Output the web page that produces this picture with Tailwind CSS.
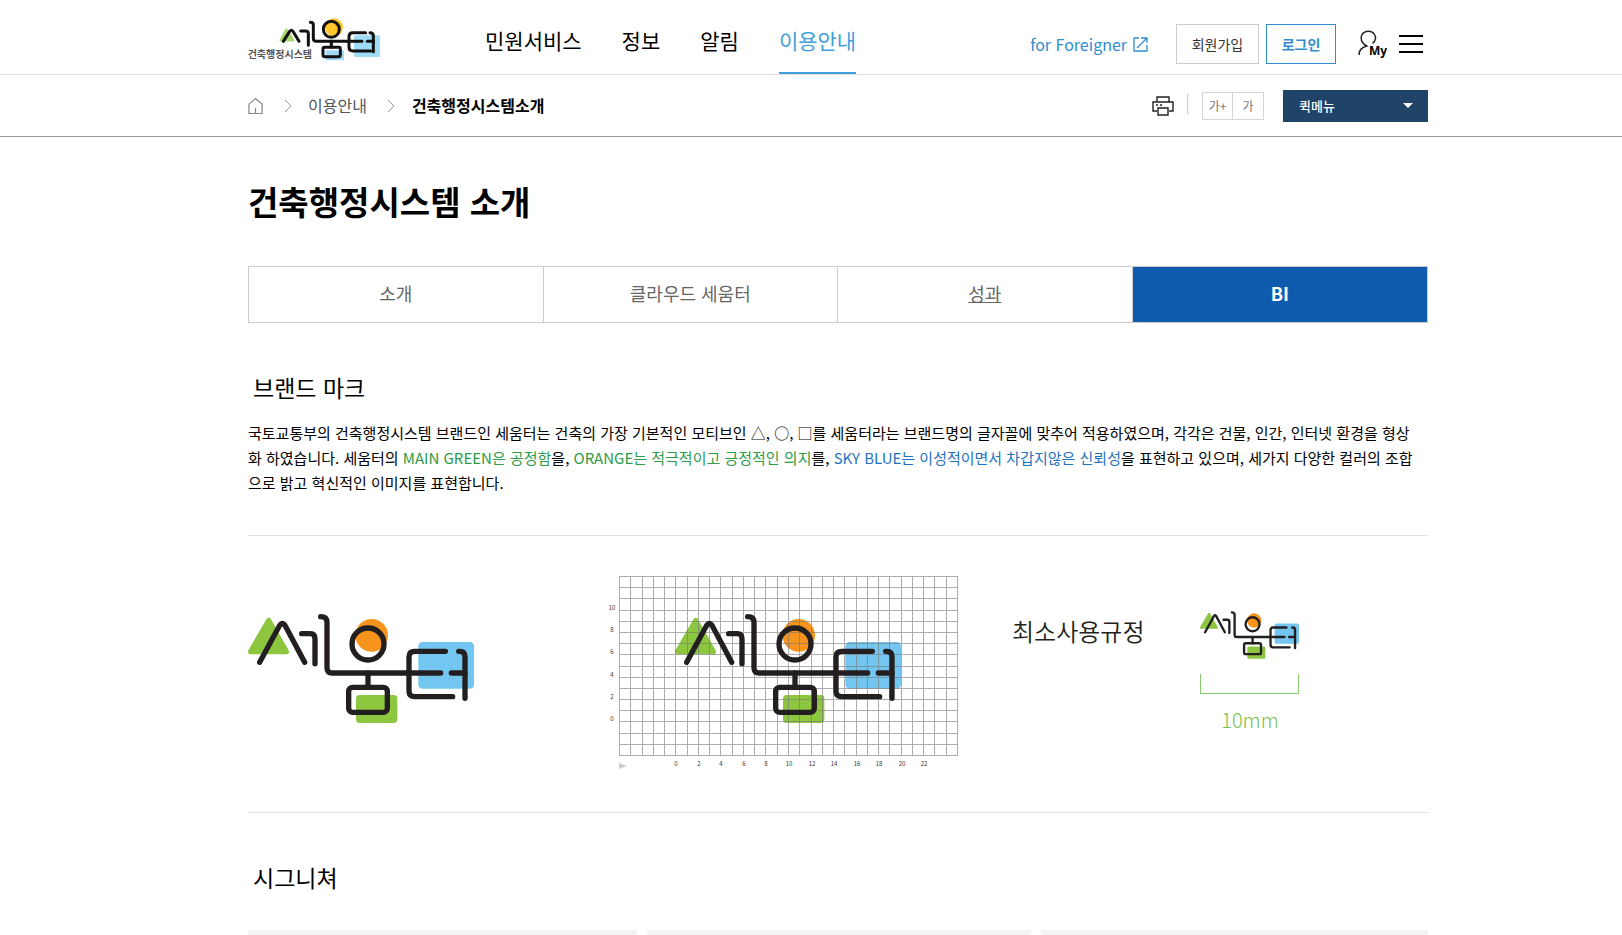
<!DOCTYPE html>
<html lang="ko">
<head>
    <meta charset="UTF-8">
    <meta name="viewport" content="width=device-width, initial-scale=1.0">
    <title>건축행정시스템 소개 - 세움터</title>
    <script src="https://cdn.jsdelivr.net/npm/@tailwindcss/browser@4"></script>
</head>
<body class="bg-white text-black font-['Noto_Sans_CJK_KR',sans-serif]">
    <!-- Shared brand mark -->
    <svg class="hidden" aria-hidden="true">
        <symbol id="mark" viewBox="54 72 678 327">
            <path d="M116 92 L62 185 H169 Z" fill="#8dc63f" stroke="#8dc63f" stroke-width="16" stroke-linejoin="round"/>
            <circle cx="425" cy="136" r="49" fill="#f7941d"/>
            <rect x="378" y="315" width="124" height="84" rx="11" fill="#8dc63f"/>
            <rect x="565" y="156" width="167" height="140" rx="13" fill="#73c6ef"/>
        </symbol>
        <symbol id="mark-lines" viewBox="54 72 678 327">
            <g fill="none" stroke="#231f20" stroke-width="16" stroke-linecap="round">
                <path d="M89 217 L149 106 Q157 95 165 106 L224 217"/>
                <path d="M215 131 H241 Q255 131 255 146 V221"/>
                <path d="M272 80 Q291 80 291 97 V233 Q291 249 307 249 H632"/>
                <circle cx="414" cy="162" r="48"/>
                <path d="M414 249 V292"/>
                <rect x="356" y="292" width="116" height="75" rx="12"/>
                <path d="M646 184 H554 Q537 184 537 201 V303 Q537 320 554 320 H668"/>
                <path d="M686 184 H689 Q705 184 705 200 V325"/>
                <path d="M664 249 H705"/>
            </g>
        </symbol>
    </svg>

    <!-- Header -->
    <header class="border-b border-[#e1e1e1] pl-[54px]">
        <div class="max-w-[1180px] h-[74px] mx-auto flex items-center">
            <a href="#" aria-label="세움터 홈" class="w-[132px] mt-1 mr-[105px]">
                <svg class="w-full" viewBox="54 53 396 129">
                    <path d="M169 88 L152 120 H190 Z" fill="#aad572" stroke="#aad572" stroke-width="7" stroke-linejoin="round"/>
                    <circle cx="312" cy="81" r="27" fill="#ffc72c"/>
                    <rect x="372" y="105" width="78" height="65" rx="5" fill="#a0dbf7"/>
                    <rect x="287" y="150" width="55" height="30" rx="3" fill="#a0dbf7"/>
                    <g fill="none" stroke="#111" stroke-width="9" stroke-linecap="round">
                        <path d="M160 123 L179 93 Q184 86 189 93 L207 123"/>
                        <path d="M212 92 H226 Q235 92 235 100 V135"/>
                        <path d="M241 66 Q250 66 250 74 V114 Q250 123 259 123 H396"/>
                        <circle cx="304" cy="87" r="24"/>
                        <path d="M304 123 V141"/>
                        <rect x="279" y="141" width="52" height="28" rx="5"/>
                        <path d="M407 97 H369 Q357 97 357 108 V141 Q357 152 369 152 H422"/>
                        <path d="M420 97 Q430 97 430 106 V154"/>
                        <path d="M412 123 H430"/>
                    </g>
                    <text x="53" y="173" font-size="30" font-weight="700" fill="#555">건축행정시스템</text>
                </svg>
            </a>
            <nav class="h-full flex gap-10 text-[21px] leading-[80px]">
                <a href="#">민원서비스</a>
                <a href="#">정보</a>
                <a href="#">알림</a>
                <a href="#" class="h-full border-b-2 border-[#3f9fdc] text-[#3f9fdc]">이용안내</a>
            </nav>
            <div class="ml-auto mt-[14px] flex items-center">
                <a href="#" class="flex items-center gap-1.5 mr-7 text-base leading-6 text-[#2f8dcf]">
                    for Foreigner
                    <svg class="w-[15px] h-[15px]" viewBox="0 0 15 15" fill="none" stroke="#2f8dcf"><path d="M6 1 H1 V14 H14 V8 M8 1 H14 V6 M4 11 L14 1" stroke-width="1.3"/></svg>
                </a>
                <button class="h-10 w-[83px] border border-[#ccc] text-sm text-[#333]">회원가입</button>
                <button class="h-10 w-[70px] ml-[7px] border border-[#2f8dcf] text-sm font-bold text-[#2f8dcf]">로그인</button>
                <button aria-label="My" class="ml-[22px]">
                    <svg class="w-[29px] h-[29px]" viewBox="0 0 29 29">
                        <path d="M1 25 Q1 18 8.700 16 C3 13 2 8 4 4.500 C7 0 14 0 16.500 4.500 C18.500 8 17.500 11 14.500 13.500" fill="none" stroke="#222" stroke-width="1.5"/>
                        <text x="11" y="25" font-size="12" font-weight="700" font-family="Noto Sans">My</text>
                    </svg>
                </button>
                <button aria-label="전체메뉴" class="ml-3 mr-[5px] flex flex-col gap-1.5">
                    <span class="w-6 h-0.5 bg-black"></span>
                    <span class="w-6 h-0.5 bg-black"></span>
                    <span class="w-6 h-0.5 bg-black"></span>
                </button>
            </div>
        </div>
    </header>

    <!-- Breadcrumb -->
    <div class="border-b border-[#999] pl-[54px]">
        <div class="max-w-[1180px] h-[61px] mx-auto flex items-center text-base">
            <a href="#" aria-label="홈">
                <svg class="w-[15px] h-[18px]" viewBox="0 0 16 18" fill="none" stroke="#888" stroke-width="1.3"><path d="M1 7 L8 1 L15 7 V17 H1 Z M8 11 V17"/></svg>
            </a>
            <svg class="w-2 h-[14px] ml-[21px] mr-4" viewBox="0 0 8 14" fill="none" stroke="#999"><path d="M1 1 L7 7 L1 13"/></svg>
            <a href="#" class="pb-0.5 text-[#555]">이용안내</a>
            <svg class="w-2 h-[14px] ml-5 mr-[17px]" viewBox="0 0 8 14" fill="none" stroke="#999"><path d="M1 1 L7 7 L1 13"/></svg>
            <strong class="pb-0.5">건축행정시스템소개</strong>
            <button aria-label="인쇄" class="ml-auto">
                <svg class="w-[22px] h-5" viewBox="0 0 22 20" fill="none" stroke="#222" stroke-width="1.4"><path d="M5 6 V1 H17 V6 M5 15 H1 V6 H21 V15 H17 M6 12 H16 V19 H6 Z M4 9 H6 M8 9 H10"/></svg>
            </button>
            <span class="w-px h-5 ml-[13px] mr-[14px] mb-1 bg-[#ccc]"></span>
            <div class="flex h-7 border border-[#d5d5d5] text-xs text-[#777]">
                <button class="w-[30px] border-r border-[#d5d5d5]">가+</button>
                <button class="w-[30px]">가</button>
            </div>
            <button class="w-[145px] h-8 ml-[19px] pl-4 pr-[15px] flex items-center justify-between bg-[#1f4467] text-[13px] font-medium text-white">
                퀵메뉴
                <svg class="w-[10px] h-[5px]" viewBox="0 0 10 5" fill="#fff"><path d="M0 0 H10 L5 5 Z"/></svg>
            </button>
        </div>
    </div>

    <!-- Main Content -->
    <main class="pl-[54px]">
        <div class="max-w-[1180px] mx-auto">
            <h1 class="pt-10 mb-[41px] text-[33px] leading-[48px] font-bold">건축행정시스템 소개</h1>

            <nav class="h-[57px] grid grid-cols-4 border border-[#ccc] divide-x divide-[#ccc] text-lg text-[#666] text-center leading-[53px]">
                <a href="#">소개</a>
                <a href="#">클라우드 세움터</a>
                <a href="#" class="underline">성과</a>
                <a href="#" class="bg-[#0f5cae] font-bold text-white">BI</a>
            </nav>

            <h2 class="mt-[46px] ml-[5px] text-[23px] leading-9">브랜드 마크</h2>
            <p class="mt-[15px] pb-10 border-b border-[#e1e1e1] text-[15px] leading-[25px]">
                국토교통부의 건축행정시스템 브랜드인 세움터는 건축의 가장 기본적인 모티브인 △, ○, □를 세움터라는 브랜드명의 글자꼴에 맞추어 적용하였으며, 각각은 건물, 인간, 인터넷 환경을 형상<br>화 하였습니다. 세움터의 <span class="text-[#2e9b46]">MAIN GREEN은 공정함</span>을, <span class="text-[#2e9b46]">ORANGE는 적극적이고 긍정적인 의지</span>를, <span class="text-[#1e73be]">SKY BLUE는 이성적이면서 차갑지않은 신뢰성</span>을 표현하고 있으며, 세가지 다양한 컬러의 조합<br>으로 밝고 혁신적인 이미지를 표현합니다.
            </p>

            <div class="py-10 flex items-start border-b border-[#e1e1e1]">
                <svg class="w-[226px] h-[109px] mt-[38px]" role="img" aria-label="세움터 브랜드 마크">
                    <use href="#mark" width="226" height="109"/>
                    <use href="#mark-lines" width="226" height="109"/>
                </svg>

                <!-- Mark on the construction grid -->
                <svg class="w-[350px] h-[196px] ml-[134px]" viewBox="0 0 350 196" role="img" aria-label="브랜드 마크 그리드">
                    <use href="#mark" x="67" y="38" width="226" height="109"/>
                    <path id="grid" fill="none" stroke="#777" stroke-opacity=".6" shape-rendering="crispEdges"/>
                    <use href="#mark-lines" x="67" y="38" width="226" height="109"/>
                    <g id="rows" font-size="6" fill="#333" text-anchor="middle"></g>
                    <g id="cols" font-size="6" fill="#333" text-anchor="middle"></g>
                    <path d="M11 187 L19 190 L11 193 Z" fill="#ccc"/>
                </svg>

                <!-- Minimum size -->
                <p class="ml-[54px] mt-[37px] text-[24px] leading-9 font-[350] text-[#231f20]">최소사용규정</p>
                <div class="ml-[56px] mt-[35px] w-[99px] text-center">
                    <svg class="w-[99px] h-12" role="img" aria-label="세움터 최소 크기">
                        <use href="#mark" width="99" height="48"/>
                        <use href="#mark-lines" width="99" height="48"/>
                    </svg>
                    <div class="h-5 mt-[15px] border border-t-0 border-[#8cc972]"></div>
                    <p class="mt-[11px] text-xl leading-[30px] font-light text-[#76c04e]">10mm</p>
                </div>
            </div>

            <h2 class="mt-[46px] ml-[5px] text-[23px] leading-9">시그니쳐</h2>
            <div class="mt-[35px] grid grid-cols-[389fr_384fr_387fr] gap-[10px]">
                <div class="h-48 bg-[#f4f4f4]"></div>
                <div class="h-48 bg-[#f4f4f4]"></div>
                <div class="h-48 bg-[#f4f4f4]"></div>
            </div>
        </div>
    </main>

    <script>
        // Construction grid: 30 x 16 cells, a label on every second line
        const cellX = 338 / 30;
        const cellY = 179 / 16;
        let lines = '';
        for (let i = 0; i <= 30; i++) {
            lines += `M${Math.round(11 + i * cellX) + 0.5} 0V180`;
        }
        for (let j = 0; j <= 16; j++) {
            lines += `M11 ${Math.round(j * cellY) + 0.5}H350`;
        }
        document.getElementById('grid').setAttribute('d', lines);

        let cols = '';
        for (let n = 0; n <= 22; n += 2) {
            cols += `<text x="${Math.round(11 + (n + 5) * cellX) + 1}" y="190">${n}</text>`;
        }
        document.getElementById('cols').innerHTML = cols;

        let rows = '';
        for (let n = 0; n <= 10; n += 2) {
            rows += `<text x="4" y="${Math.round((13 - n) * cellY)}">${n}</text>`;
        }
        document.getElementById('rows').innerHTML = rows;
    </script>
</body>
</html>
